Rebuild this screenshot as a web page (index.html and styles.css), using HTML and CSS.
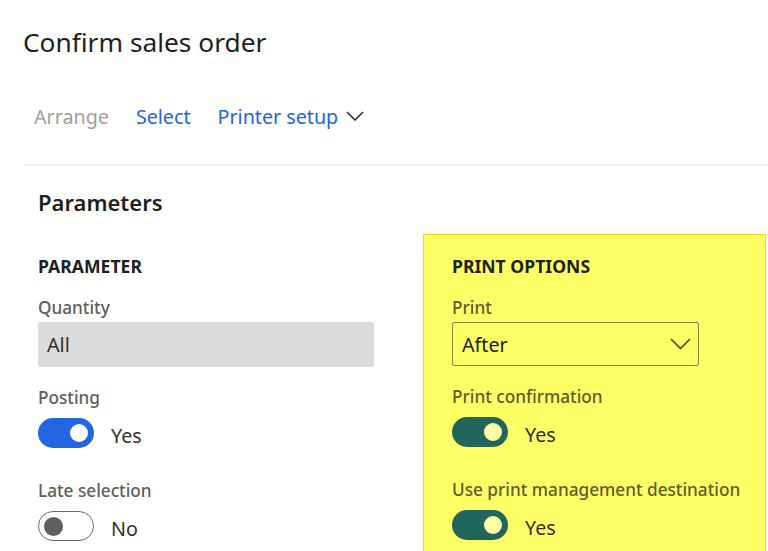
FILE: index.html
```html
<!DOCTYPE html>
<html lang="en">
<head>
<meta charset="utf-8">
<title>Confirm sales order</title>
<link rel="stylesheet" href="styles.css">
</head>
<body>
<div class="page">
  <h1 class="title">Confirm sales order</h1>
  <div class="toolbar">
    <span class="tb-item disabled">Arrange</span>
    <span class="tb-item link">Select</span>
    <span class="tb-item link">Printer setup
      <svg class="tb-chev" width="18" height="10" viewBox="0 0 18 10"><path d="M1 1 L9 9 L17 1" fill="none" stroke="#323130" stroke-width="1.6"/></svg>
    </span>
  </div>
  <div class="divider"></div>
  <div class="content">
    <h2 class="section-title">Parameters</h2>
    <div class="columns">
      <div class="col col-left">
        <div class="group-title">PARAMETER</div>
        <div class="field">
          <div class="label">Quantity</div>
          <div class="input readonly">All</div>
        </div>
        <div class="field">
          <div class="label">Posting</div>
          <div class="toggle-row">
            <span class="toggle on"><span class="knob"></span></span>
            <span class="toggle-text">Yes</span>
          </div>
        </div>
        <div class="field">
          <div class="label">Late selection</div>
          <div class="toggle-row">
            <span class="toggle off"><span class="knob"></span></span>
            <span class="toggle-text">No</span>
          </div>
        </div>
      </div>
      <div class="col col-right highlight">
        <div class="group-title">PRINT OPTIONS</div>
        <div class="field">
          <div class="label">Print</div>
          <div class="input select">
            <span>After</span>
            <svg class="dd-chev" width="21" height="12" viewBox="0 0 21 12"><path d="M1 1 L10.5 10.5 L20 1" fill="none" stroke="#4c4b22" stroke-width="1.6"/></svg>
          </div>
        </div>
        <div class="field">
          <div class="label">Print confirmation</div>
          <div class="toggle-row">
            <span class="toggle on"><span class="knob"></span></span>
            <span class="toggle-text">Yes</span>
          </div>
        </div>
        <div class="field">
          <div class="label">Use print management destination</div>
          <div class="toggle-row">
            <span class="toggle on"><span class="knob"></span></span>
            <span class="toggle-text">Yes</span>
          </div>
        </div>
      </div>
    </div>
  </div>
</div>
</body>
</html>
```
FILE: styles.css
```css
html, body {
  margin: 0;
  padding: 0;
  background: #ffffff;
}
body {
  font-family: "Noto Sans", "Open Sans", sans-serif;
  color: #201f1e;
  overflow: hidden;
  height: 551px;
}
.page {
  padding-left: 23px;
  height: 551px;
  overflow: hidden;
}
.title {
  margin: 24px 0 0 0;
  font-size: 26.3px;
  font-weight: 400;
  line-height: 36px;
  color: #201f1e;
}
.toolbar {
  display: flex;
  align-items: center;
  gap: 27px;
  margin-top: 42px;
  padding-left: 11px;
  height: 30px;
  font-size: 19.7px;
  line-height: 30px;
}
.tb-item {
  display: flex;
  align-items: center;
}
.disabled { color: #a19f9d; }
.link { color: #2266e3; }
.tb-chev { margin-left: 8px; margin-top: -2px; }
.divider {
  margin-top: 32px;
  margin-left: 1px;
  height: 2px;
  background: #f3f2f1;
}
.content {
  padding-left: 15px;
}
.section-title {
  margin: 21px 0 0 0;
  font-size: 22px;
  font-weight: 600;
  line-height: 30px;
  color: #201f1e;
}
.columns {
  display: flex;
  margin-top: 17px;
  align-items: flex-start;
}
.col {
  padding-top: 20px;
}
.col-left {
  width: 336px;
}
.col-right {
  margin-left: 49px;
  width: 300px;
  height: 300px;
  padding-left: 28px;
  padding-right: 13px;
  padding-top: 19px;
  overflow: hidden;
}
.highlight {
  background: #ffff66;
  border: 1px solid #ffd21f;
  border-bottom: none;
  color: #201f0c;
}
.group-title {
  font-size: 17.6px;
  font-weight: 700;
  line-height: 24px;
  color: #201f1e;
  white-space: nowrap;
}
.highlight .group-title { color: #201f0c; }
.field {
  margin-top: 18px;
}
.field + .field {
  margin-top: 19px;
}
.field:last-child .toggle-row {
  padding-bottom: 0;
}
.label {
  font-size: 17.2px;
  line-height: 24px;
  font-weight: 500;
  color: #605e5c;
  white-space: nowrap;
}
.highlight .label { color: #605e24; }
.input {
  margin-top: 2px;
  height: 45px;
  box-sizing: border-box;
  border-radius: 2px;
  font-size: 19.7px;
  display: flex;
  align-items: center;
  padding-left: 9px;
}
.readonly {
  background: #dcdcdc;
  color: #323130;
}
.select {
  width: 247px;
  border: 1px solid #8a8836;
  justify-content: space-between;
  padding-right: 7px;
  color: #201f0c;
  height: 44px;
}
.toggle-row {
  display: flex;
  align-items: center;
  padding-top: 8px;
  padding-bottom: 12px;
  height: 30px;
}
.toggle {
  width: 56px;
  height: 30px;
  box-sizing: border-box;
  border-radius: 15px;
  display: flex;
  align-items: center;
}
.toggle.on {
  background: #2266e3;
  justify-content: flex-end;
  padding-right: 6px;
}
.highlight .toggle.on { background: #22665b; }
.toggle.on .knob {
  width: 18px;
  height: 18px;
  border-radius: 50%;
  background: #ffffff;
}
.highlight .toggle.on .knob { background: #ffffa8; }
.toggle.off {
  border: 1.5px solid #6b6a69;
  background: #ffffff;
  padding-left: 5px;
}
.toggle.off .knob {
  width: 19px;
  height: 19px;
  border-radius: 50%;
  background: #605e5c;
}
.toggle-text {
  margin-left: 17px;
  margin-top: 5px;
  font-size: 19.7px;
  color: #323130;
}
.highlight .toggle-text { color: #323114; }
```
